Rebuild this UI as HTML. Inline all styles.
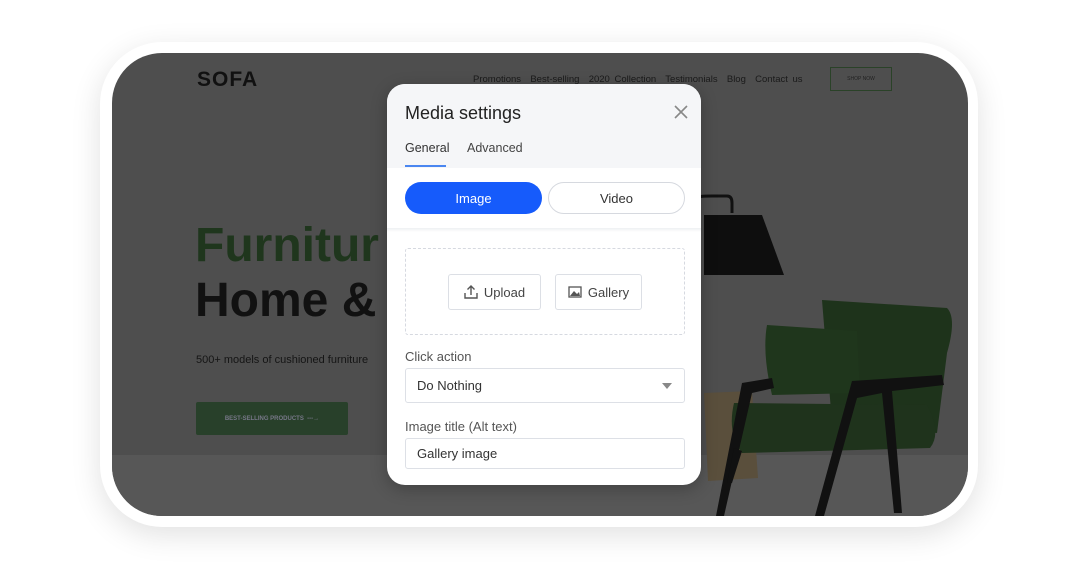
<!DOCTYPE html>
<html><head><style>
*{margin:0;padding:0;box-sizing:border-box}
body{width:1080px;height:569px;background:#fff;position:relative;overflow:hidden;font-family:"Liberation Sans",sans-serif}
.frame{position:absolute;left:100px;top:42px;width:878px;height:485px;border-radius:62px;background:#fff;box-shadow:0 8px 30px rgba(0,0,0,.12)}
.screen{position:absolute;left:112px;top:53px;width:856px;height:463px;border-radius:50px;background:#4e4e4e;overflow:hidden}
.abs{position:absolute}
.modal{position:absolute;left:387px;top:84px;width:314px;height:401px;border-radius:18px;background:#fff;overflow:hidden;box-shadow:0 4px 16px rgba(0,0,0,.25)}
.hdr{position:absolute;left:0;top:0;width:314px;height:84px;background:#f5f6f8}
.btn{position:absolute;border:1px solid #dcdfe5;border-radius:3px;background:#fff;font-size:13px;color:#444;display:flex;align-items:center;justify-content:center;gap:6px}
.inp{position:absolute;left:18px;width:280px;border:1px solid #dde0e6;border-radius:3px;font-size:13px;color:#333;padding-left:11px;display:flex;align-items:center}
.lbl{position:absolute;left:18px;font-size:13px;color:#555}
</style></head><body>
<div class="frame"></div>
<div class="screen">
 <div class="abs" style="left:0;top:402px;width:856px;height:61px;background:#575757"></div>
 <div class="abs" style="left:85px;top:15px;font-size:21px;font-weight:bold;color:#111;letter-spacing:1px">SOFA</div>
 <div class="abs" style="left:361px;top:21px;font-size:9.5px;color:#1a1a1a;word-spacing:2px">Promotions&nbsp; Best-selling&nbsp; 2020 Collection&nbsp; Testimonials&nbsp; Blog&nbsp; Contact us</div>
 <div class="abs" style="left:718px;top:14px;width:62px;height:24px;border:1px solid #2a4228;font-size:5px;color:#222;display:flex;align-items:center;justify-content:center">SHOP NOW</div>
 <div class="abs" style="left:83px;top:165px;font-size:48px;font-weight:bold;color:#1f361d;line-height:56px">Furnitur</div>
 <div class="abs" style="left:83px;top:220px;font-size:48px;font-weight:bold;color:#111;line-height:56px">Home &amp;</div>
 <div class="abs" style="left:84px;top:301px;font-size:11px;color:#151515">500+ models of cushioned furniture</div>
 <div class="abs" style="left:84px;top:349px;width:152px;height:33px;background:#28402a;border-radius:2px;font-size:6px;color:#778;display:flex;align-items:center;justify-content:center;font-weight:bold">BEST-SELLING PRODUCTS &nbsp;---→</div>
 <svg class="abs" style="left:0;top:0" width="856" height="463">
  <path d="M585 145 Q585 143 600 143 L615 143 Q620 143 620 150 L620 160" fill="none" stroke="#111" stroke-width="3"/>
  <path d="M592 162 L650 162 L672 222 L592 222 Z" fill="#0e0e0e"/>
  <path d="M592 340 L640 338 L646 425 L596 428 Z" fill="#5a4f3c"/>
  <path d="M710 247 L835 255 Q845 265 835 300 L825 380 L720 370 Z" fill="#1e331b"/>
  <path d="M655 272 L745 278 L748 340 L660 342 Q650 300 655 272 Z" fill="#1f361c"/>
  <path d="M622 350 L815 352 Q830 380 818 395 L630 400 Q615 380 622 350 Z" fill="#1f331c"/>
  <path d="M630 330 L660 325 L662 335 L640 340 L612 463 L604 463 Z" fill="#111"/>
  <path d="M740 328 L830 322 L832 332 L780 338 L790 460 L782 460 L770 340 L745 345 L712 463 L703 463 Z" fill="#111"/>
  <path d="M622 395 L615 430 L620 430 L630 398 Z" fill="#111"/>
 </svg>
</div>
<div class="modal">
 <div class="hdr"></div>
 <div class="abs" style="left:18px;top:19px;font-size:18px;color:#222">Media settings</div>
 <svg class="abs" style="left:287px;top:21px" width="14" height="14"><path d="M1 1L13 13M13 1L1 13" stroke="#888" stroke-width="1.6"/></svg>
 <div class="abs" style="left:18px;top:57px;font-size:12.5px;color:#333">General</div>
 <div class="abs" style="left:18px;top:81px;width:41px;height:2px;background:#4a86f0"></div>
 <div class="abs" style="left:80px;top:57px;font-size:12.5px;color:#444">Advanced</div>
 <div class="abs" style="left:18px;top:98px;width:137px;height:32px;border-radius:16px;background:#165bfb;color:#fff;font-size:13px;display:flex;align-items:center;justify-content:center">Image</div>
 <div class="abs" style="left:161px;top:98px;width:137px;height:32px;border-radius:16px;border:1px solid #d6d9df;color:#333;font-size:13px;display:flex;align-items:center;justify-content:center">Video</div>
 <div class="abs" style="left:0;top:144px;width:314px;height:4px;background:linear-gradient(#eef0f3,#fff)"></div>
 <div class="abs" style="left:18px;top:164px;width:280px;height:87px;border:1px dashed #d6d9e0;border-radius:3px"></div>
 <div class="btn" style="left:61px;top:190px;width:93px;height:36px"><svg width="14" height="14"><path d="M7 10V1M3.5 4.5L7 1L10.5 4.5M1 8V13H13V8" fill="none" stroke="#555" stroke-width="1.4"/></svg>Upload</div>
 <div class="btn" style="left:168px;top:190px;width:87px;height:36px"><svg width="14" height="12"><rect x="1" y="1" width="12" height="10" fill="none" stroke="#555" stroke-width="1.3"/><path d="M2 10L6 5L9 8L11 6L12 10Z" fill="#555"/></svg>Gallery</div>
 <div class="lbl" style="top:265px">Click action</div>
 <div class="inp" style="top:284px;height:35px">Do Nothing<svg class="abs" style="right:12px;top:14px" width="10" height="6"><path d="M0 0H10L5 6Z" fill="#888"/></svg></div>
 <div class="lbl" style="top:335px">Image title (Alt text)</div>
 <div class="inp" style="top:354px;height:31px">Gallery image</div>
</div>
</body></html>
